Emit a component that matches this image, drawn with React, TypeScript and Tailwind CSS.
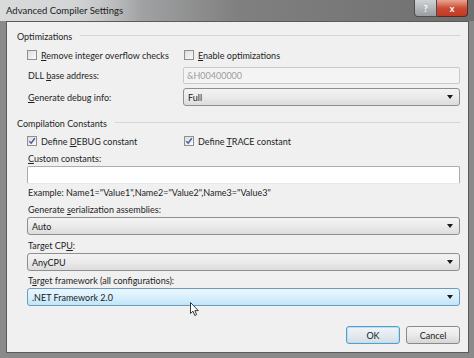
import React from "react";

const font = { fontFamily: 'Lato, "Noto Sans", sans-serif' };

function Acc({ children }: { children: React.ReactNode }) {
  return <span className="underline underline-offset-[1px] decoration-[0.5px]">{children}</span>;
}

function Check({ checked }: { checked?: boolean }) {
  return (
    <span className="inline-flex items-center justify-center w-[10px] h-[10px] border border-[#8e8f8f] bg-gradient-to-br from-[#dcdcdc] to-[#fbfbfb] shrink-0">
      {checked && (
        <svg width="8" height="8" viewBox="0 0 8 8">
          <path d="M1.3 4.2 L3.2 6.2 L6.8 1.2" fill="none" stroke="#4a5f97" strokeWidth="1.5" />
        </svg>
      )}
    </span>
  );
}

function Arrow() {
  return (
    <svg width="6" height="4" viewBox="0 0 6 4" className="shrink-0">
      <path d="M0 0 L6 0 L3 4 Z" fill="#1a1a1a" />
    </svg>
  );
}

function Combo({ value, hot }: { value: string; hot?: boolean }) {
  return (
    <div
      className={`h-[18px] flex items-center justify-between pl-[4px] pr-[6px] rounded-[3px] border ${
        hot
          ? "border-[#6a9cc2] bg-gradient-to-b from-[#eaf6fd] via-[#d9f0fc] to-[#bfe5f8]"
          : "border-[#8f8f8f] bg-gradient-to-b from-[#f3f3f3] via-[#ebebeb] to-[#dcdcdc]"
      }`}
    >
      <span className="text-[#1a1a1a]">{value}</span>
      <Arrow />
    </div>
  );
}

function Heading({ text }: { text: string }) {
  return (
    <div className="h-[16px] flex items-center gap-[8px] pl-[10px] pr-[8px]">
      <span className="text-[#1e1e1e] whitespace-nowrap">{text}</span>
      <div className="flex-1 h-[2px] border-t border-[#d5d5d5] border-b-white" />
    </div>
  );
}

function Button({ label, def }: { label: string; def?: boolean }) {
  return (
    <div
      className={`w-[54px] h-[18px] flex items-center justify-center rounded-[3px] border text-[#1a1a1a] ${
        def
          ? "border-[#5b9bc5] bg-gradient-to-b from-[#eef4f8] via-[#e3ebf0] to-[#d3dde4] shadow-[inset_0_0_0_1px_#b6e1f5]"
          : "border-[#8a8a8a] bg-gradient-to-b from-[#f4f4f4] via-[#ebebeb] to-[#d6d6d6]"
      }`}
    >
      {label}
    </div>
  );
}

export default function App() {
  return (
    <div
      className="w-[474px] h-[358px] overflow-hidden relative bg-[#8a8a8a] text-[9px] leading-none select-none"
      style={font}
    >
      {/* title bar */}
      <div className="h-[21px] flex items-start bg-gradient-to-r from-[#d3d6d9] via-[#808080] to-[#6f6f6f] relative">
        <div className="h-[21px] flex items-center pl-[6px] pr-[18px] bg-gradient-to-r from-[#d8dadc] via-[#d3d5d7] to-transparent">
          <span className="text-[#1b1b1b] text-[9.5px]">Advanced Compiler Settings</span>
        </div>
        <div className="flex-1" />
        <div className="flex mr-[6px]">
          <div className="w-[23px] h-[17px] flex items-center justify-center rounded-bl-[4px] border border-t-0 border-[#4d4d4d] bg-gradient-to-b from-[#d0d3d6] to-[#9a9da1] text-white font-bold text-[9px]">
            ?
          </div>
          <div className="w-[31px] h-[17px] flex items-center justify-center rounded-br-[4px] border border-t-0 border-l-0 border-[#5a2a22] bg-gradient-to-b from-[#e8a493] via-[#cc4b33] to-[#c13a22] text-white font-bold text-[9px]">
            x
          </div>
        </div>
      </div>

      {/* client area */}
      <div className="ml-[6px] mr-[5px] h-[332px] border border-[#5a5a5a] bg-[#f0f0f0] flex flex-col text-[#1e1e1e]">
        <div className="mt-[6px]">
          <Heading text="Optimizations" />
        </div>

        <div className="mt-[3px] h-[16px] flex items-center pl-[20px]">
          <div className="w-[157px] flex items-center gap-[4px]">
            <Check />
            <span>
              <Acc>R</Acc>emove integer overflow checks
            </span>
          </div>
          <div className="flex items-center gap-[4px]">
            <Check />
            <span>
              <Acc>E</Acc>nable optimizations
            </span>
          </div>
        </div>

        <div className="mt-[4px] h-[17px] flex items-center pl-[21px] pr-[8px]">
          <span className="w-[155px]">
            DLL <Acc>b</Acc>ase address:
          </span>
          <div className="flex-1 h-[17px] flex items-center pl-[3px] border border-[#c9c9c9] rounded-[2px] bg-[#f4f4f4] text-[#9c9c9c]">
            &amp;H00400000
          </div>
        </div>

        <div className="mt-[4px] h-[18px] flex items-center pl-[21px] pr-[8px]">
          <span className="w-[155px]">
            <Acc>G</Acc>enerate debug info:
          </span>
          <div className="flex-1">
            <Combo value="Full" />
          </div>
        </div>

        <div className="mt-[9px]">
          <Heading text="Compilation Constants" />
        </div>

        <div className="mt-[2px] h-[16px] flex items-center pl-[20px]">
          <div className="w-[157px] flex items-center gap-[4px]">
            <Check checked />
            <span>
              Define <Acc>D</Acc>EBUG constant
            </span>
          </div>
          <div className="flex items-center gap-[4px]">
            <Check checked />
            <span>
              Define <Acc>T</Acc>RACE constant
            </span>
          </div>
        </div>

        <div className="mt-[1px] h-[16px] flex items-center pl-[21px]">
          <span>
            <Acc>C</Acc>ustom constants:
          </span>
        </div>

        <div className="pl-[20px] pr-[8px]">
          <div className="h-[18px] bg-white border border-[#abadb3] border-b-[#e3e9ef] rounded-[2px]" />
        </div>

        <div className="h-[16px] flex items-center pl-[21px]">
          <span>Example: Name1="Value1",Name2="Value2",Name3="Value3"</span>
        </div>

        <div className="mt-[1px] h-[16px] flex items-center pl-[21px]">
          <span>
            Generate <Acc>s</Acc>erialization assemblies:
          </span>
        </div>
        <div className="pl-[20px] pr-[8px]">
          <Combo value="Auto" />
        </div>

        <div className="mt-[2px] h-[16px] flex items-center pl-[21px]">
          <span>
            Target CP<Acc>U</Acc>:
          </span>
        </div>
        <div className="pl-[20px] pr-[8px]">
          <Combo value="AnyCPU" />
        </div>

        <div className="mt-[2px] h-[15px] flex items-center pl-[21px]">
          <span>
            T<Acc>a</Acc>rget framework (all configurations):
          </span>
        </div>
        <div className="pl-[20px] pr-[8px] relative">
          <Combo value=".NET Framework 2.0" hot />
          <svg
            width="10"
            height="15"
            viewBox="0 0 10 15"
            className="absolute left-[183px] top-[14px]"
          >
            <path
              d="M0.5 0.5 L0.5 11.5 L3 9.2 L4.8 13.5 L6.6 12.7 L4.9 8.6 L8.3 8.6 Z"
              fill="white"
              stroke="#222"
              strokeWidth="0.9"
              strokeLinejoin="round"
            />
          </svg>
        </div>

        <div className="mt-[20px] flex justify-end gap-[6px] pr-[8px]">
          <Button label="OK" def />
          <Button label="Cancel" />
        </div>
      </div>
    </div>
  );
}
